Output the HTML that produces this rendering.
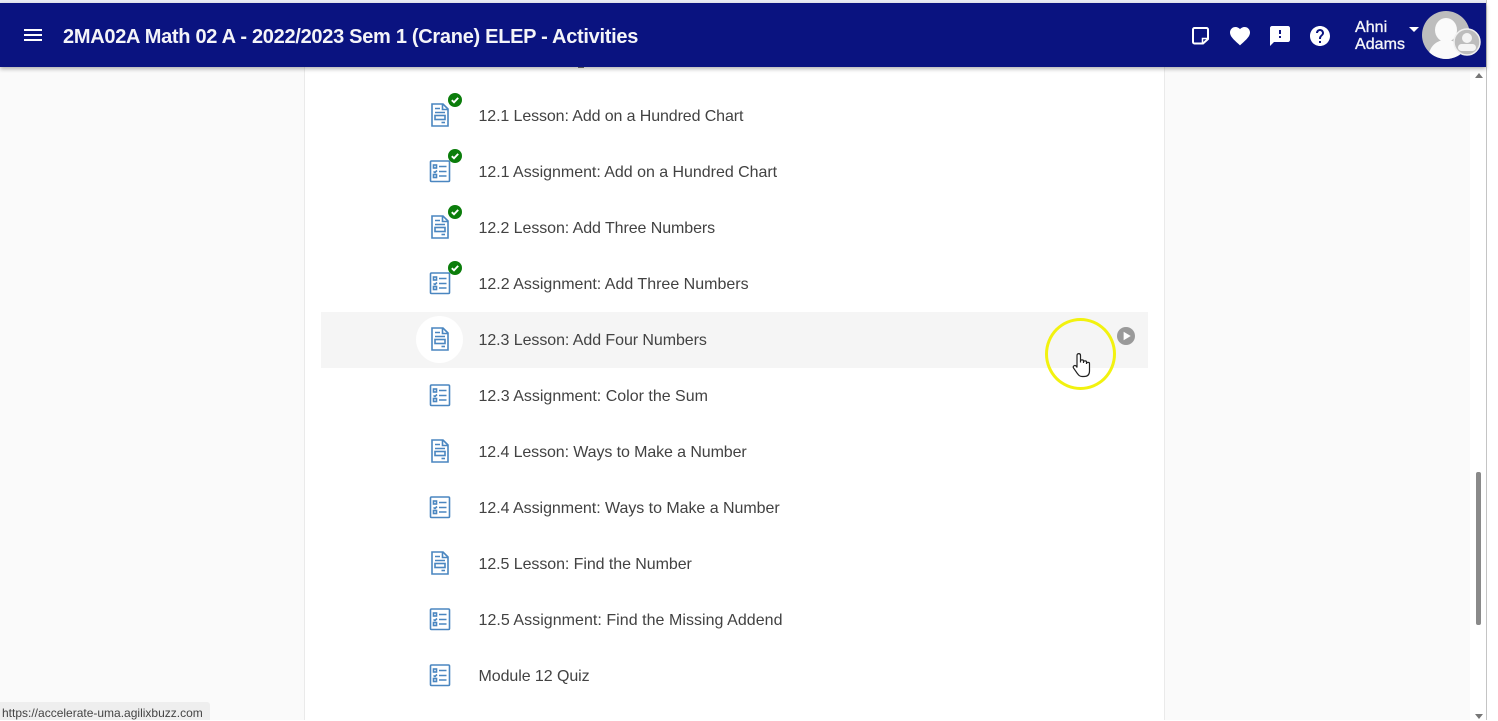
<!DOCTYPE html>
<html><head><meta charset="utf-8"><style>
*{box-sizing:border-box}
html,body{margin:0;padding:0;width:1498px;height:720px;overflow:hidden;background:#fff;font-family:"Liberation Sans",sans-serif}
.a{position:absolute}
.t{position:absolute;left:478.500px;font-size:16px;line-height:20px;color:#424242;white-space:nowrap}
.i{position:absolute;left:428px;width:24px;height:24px}
.c{position:absolute;left:448px;width:14px;height:14px}
</style></head><body>
<svg width="0" height="0" style="position:absolute"><defs>
<symbol id="doc" viewBox="0 0 24 24"><g fill="none" stroke="#4a86c0" stroke-width="1.600"><path d="M4 1H15L20 6V23H4Z"/><path d="M14.500 1.500V6.500H20"/><path d="M7 5.500H12M7 9.500H17"/><rect x="7" y="12.500" width="10" height="4"/><path d="M13.500 19.500H17"/></g></symbol>
<symbol id="list" viewBox="0 0 24 24"><g fill="none" stroke="#4a86c0" stroke-width="1.600"><rect x="2.500" y="2" width="19" height="20.500" rx="1"/><rect x="5.500" y="6" width="3" height="3"/><rect x="5.500" y="15.500" width="3" height="3"/><path d="M5.500 12.500L7 13.500L9 11.500M11 7.500H18.500M11 12.500H18.500M11 17H18.500"/></g></symbol>
<symbol id="chk" viewBox="0 0 14 14"><circle cx="7" cy="7" r="7" fill="#0b7d0b"/><path d="M3.800 7.200L6 9.300L10.200 4.900" fill="none" stroke="#fff" stroke-width="1.900"/></symbol>
</defs></svg>

<div class="a" style="left:0;top:0;width:305px;height:720px;background:#fafafa"></div>
<div class="a" style="left:1164px;top:0;width:322px;height:720px;background:#fafafa"></div>
<div class="a" style="left:304px;top:0;width:1px;height:720px;background:#eaeaea"></div>
<div class="a" style="left:1164px;top:0;width:1px;height:720px;background:#eaeaea"></div>

<div class="a" style="left:1470px;top:68px;width:16px;height:652px;background:#fff"></div>
<div class="a" style="left:1486px;top:0;width:1px;height:720px;background:#c4c4c4"></div>
<div class="a" style="left:1476px;top:472px;width:5px;height:153px;background:#8a8a8a;border-radius:2px"></div>
<div class="a" style="left:1475px;top:73px;width:0;height:0;border-left:4px solid transparent;border-right:4px solid transparent;border-bottom:5px solid #777"></div>
<div class="a" style="left:1475px;top:714px;width:0;height:0;border-left:4px solid transparent;border-right:4px solid transparent;border-top:5px solid #777"></div>

<div class="a" style="left:321px;top:312px;width:827px;height:56px;background:#f5f5f5"></div>
<div class="a" style="left:416px;top:316px;width:47px;height:47px;border-radius:50%;background:#fff"></div>

<svg class="a" style="left:1117px;top:327px" width="18" height="18" viewBox="0 0 19 19"><circle cx="9.500" cy="9.500" r="9.500" fill="#9a9a9a"/><path d="M7 5L14.500 9.500L7 14Z" fill="#fff"/></svg>

<div class="a" style="left:0;top:0;width:1486px;height:3px;background:#e8eaf4"></div>
<div class="a" style="left:0;top:3px;width:1486px;height:64px;background:#0a1380;box-shadow:0 2px 4px rgba(0,0,0,.3)"></div>
<div class="a" style="left:578px;top:67px;width:6px;height:1px;background:#555"></div>
<svg class="a" style="left:21px;top:23px" width="24" height="24" viewBox="0 0 24 24"><path d="M3 18h18v-2H3v2zm0-5h18v-2H3v2zm0-7v2h18V6H3z" fill="#fff"/></svg>
<div class="a" style="left:63px;top:24.500px;font-size:20px;line-height:24px;font-weight:bold;letter-spacing:-.29px;color:#f4f4f8;white-space:nowrap">2MA02A Math 02 A - 2022/2023 Sem 1 (Crane) ELEP - Activities</div>

<svg class="a" style="left:1187.500px;top:24px" width="24" height="24" viewBox="0 0 24 24"><path d="M5 5.500A1.500 1.500 0 0 1 6.500 4H18.500A1.500 1.500 0 0 1 20 5.500V15L15 19.500H6.500A1.500 1.500 0 0 1 5 18Z" fill="none" stroke="#fff" stroke-width="2"/><path d="M14.500 19V14.500H19.500" fill="none" stroke="#fff" stroke-width="1.500"/></svg>
<svg class="a" style="left:1227.500px;top:24px" width="24" height="24" viewBox="0 0 24 24"><path d="M12 21.350l-1.450-1.320C5.400 15.360 2 12.280 2 8.500 2 5.420 4.420 3 7.500 3c1.740 0 3.410.81 4.500 2.090C13.090 3.810 14.760 3 16.500 3 19.580 3 22 5.420 22 8.500c0 3.780-3.400 6.860-8.550 11.540L12 21.350z" fill="#fff"/></svg>
<svg class="a" style="left:1267.500px;top:24px" width="24" height="24" viewBox="0 0 24 24"><path d="M20 2H4c-1.100 0-1.990.9-1.990 2L2 22l4-4h14c1.100 0 2-.9 2-2V4c0-1.100-.9-2-2-2zm-7 12h-2v-2h2v2zm0-4h-2V6h2v4z" fill="#fff"/></svg>
<svg class="a" style="left:1307.500px;top:24px" width="24" height="24" viewBox="0 0 24 24"><path d="M12 2C6.480 2 2 6.480 2 12s4.480 10 10 10 10-4.480 10-10S17.520 2 12 2zm1 17h-2v-2h2v2zm2.070-7.750l-.9.920C13.450 12.900 13 13.500 13 15h-2v-.5c0-1.100.45-2.100 1.170-2.830l1.240-1.260c.37-.36.590-.86.590-1.410 0-1.100-.9-2-2-2s-2 .9-2 2H8c0-2.210 1.790-4 4-4s4 1.790 4 4c0 .88-.36 1.680-.93 2.250z" fill="#fff"/></svg>

<div class="a" style="left:1355px;top:19px;font-size:16px;line-height:17px;color:#f4f4f8;white-space:nowrap;-webkit-text-stroke:.35px #f4f4f8;letter-spacing:.05px">Ahni<br>Adams</div>
<div class="a" style="left:1409px;top:27px;width:0;height:0;border-left:5px solid transparent;border-right:5px solid transparent;border-top:5px solid #fff"></div>
<svg class="a" style="left:1422px;top:11px" width="60" height="50" viewBox="0 0 60 50"><defs><clipPath id="cp"><circle cx="24" cy="24" r="24"/></clipPath></defs><circle cx="24" cy="24" r="24" fill="#bdbdbd"/><g clip-path="url(#cp)"><ellipse cx="24" cy="19" rx="11" ry="12" fill="#fafafa"/><path d="M6 50C6 36 14 29 24 29S42 36 42 50Z" fill="#fafafa"/></g><circle cx="45" cy="31" r="13" fill="#bdbdbd" stroke="#f0f0f0" stroke-width="1.500"/><circle cx="45" cy="27" r="5" fill="#f4f4f4"/><rect x="36" y="33" width="18" height="7" rx="3.500" fill="#f4f4f4"/></svg>

<svg class="i" style="top:103px"><use href="#doc"/></svg><svg class="c" style="top:93px"><use href="#chk"/></svg><div class="t" style="top:107px;letter-spacing:-.11px">12.1 Lesson: Add on a Hundred Chart</div>
<svg class="i" style="top:159px"><use href="#list"/></svg><svg class="c" style="top:149px"><use href="#chk"/></svg><div class="t" style="top:163px;letter-spacing:-.03px">12.1 Assignment: Add on a Hundred Chart</div>
<svg class="i" style="top:215px"><use href="#doc"/></svg><svg class="c" style="top:205px"><use href="#chk"/></svg><div class="t" style="top:219px;letter-spacing:-.08px">12.2 Lesson: Add Three Numbers</div>
<svg class="i" style="top:271px"><use href="#list"/></svg><svg class="c" style="top:261px"><use href="#chk"/></svg><div class="t" style="top:275px">12.2 Assignment: Add Three Numbers</div>
<svg class="i" style="top:327px"><use href="#doc"/></svg><div class="t" style="top:331px;letter-spacing:-.07px">12.3 Lesson: Add Four Numbers</div>
<svg class="i" style="top:383px"><use href="#list"/></svg><div class="t" style="top:387px">12.3 Assignment: Color the Sum</div>
<svg class="i" style="top:439px"><use href="#doc"/></svg><div class="t" style="top:443px;letter-spacing:-.1px">12.4 Lesson: Ways to Make a Number</div>
<svg class="i" style="top:495px"><use href="#list"/></svg><div class="t" style="top:499px;letter-spacing:-.04px">12.4 Assignment: Ways to Make a Number</div>
<svg class="i" style="top:551px"><use href="#doc"/></svg><div class="t" style="top:555px;letter-spacing:-.07px">12.5 Lesson: Find the Number</div>
<svg class="i" style="top:607px"><use href="#list"/></svg><div class="t" style="top:611px;letter-spacing:.04px">12.5 Assignment: Find the Missing Addend</div>
<svg class="i" style="top:663px"><use href="#list"/></svg><div class="t" style="top:667px;letter-spacing:-.07px">Module 12 Quiz</div>

<div class="a" style="left:1045px;top:318px;width:71px;height:72px;border-radius:50%;border:3px solid #f2f20f"></div>
<svg class="a" style="left:1072px;top:351px" width="20" height="27" viewBox="0 0 20 27"><path d="M5 14V4.500C5 2 8.500 2 8.500 4.500V11.500V10C8.500 8.500 11.500 8.500 11.500 10V12V11C11.500 9.500 14.500 9.500 14.500 11V13V12.500C14.500 11 17.500 11 17.500 12.500V20C17.500 23 16 25.500 12 25.500H10C7.500 25.500 6.500 24 5 22L1.500 17C.5 15 3 13.500 4.500 15.500L5 16.500Z" fill="#fff" stroke="#222" stroke-width="1.200"/></svg>

<div class="a" style="left:0;top:702px;width:210px;height:18px;background:#eeeeee;border-top-right-radius:3px"></div>
<div class="a" style="left:2px;top:705px;font-size:12px;line-height:16px;color:#444;white-space:nowrap">https://accelerate-uma.agilixbuzz.com</div>
</body></html>
